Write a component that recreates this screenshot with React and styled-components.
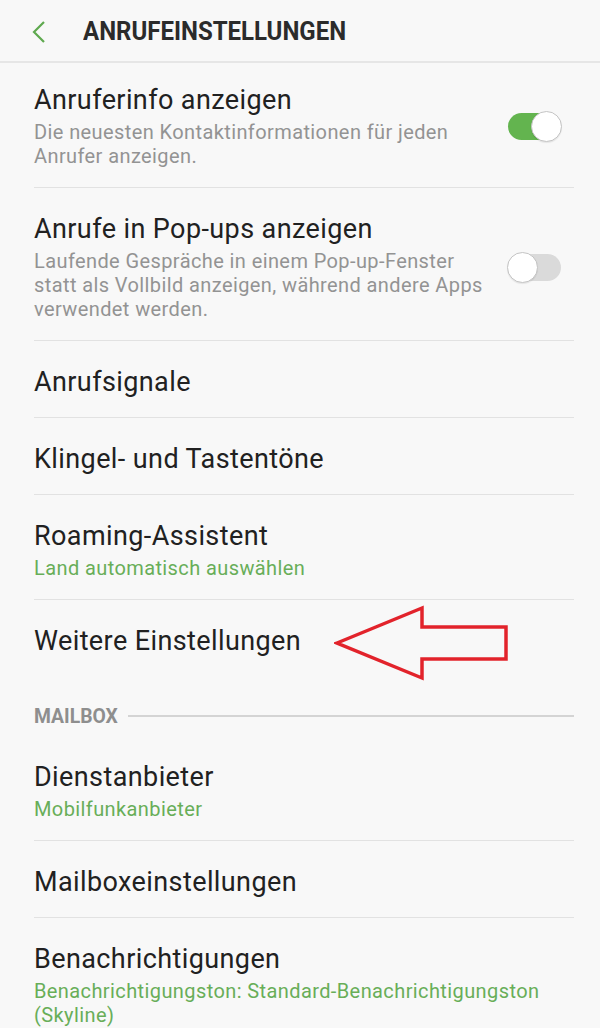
import React from 'react';
import styled, { createGlobalStyle } from 'styled-components';

const GlobalStyle = createGlobalStyle`
  html, body {
    margin: 0;
    padding: 0;
    background: #f8f8f8;
  }
  body {
    font-family: Roboto, "Noto Sans", "Liberation Sans", sans-serif;
    -webkit-font-smoothing: antialiased;
  }
`;

const Settings = () => {
  return (
    <Page>
      <GlobalStyle />
      <Header>
        <BackButton aria-label="Zurück">
          <svg width="18" height="26" viewBox="0 0 18 26">
            <polyline points="14,3 4,13 14,23" fill="none" stroke="#5fa94f" strokeWidth="2.2" />
          </svg>
        </BackButton>
        <HeaderTitle>ANRUFEINSTELLUNGEN</HeaderTitle>
      </Header>

      <List>
        <Row>
          <TextBlock>
            <Title>Anruferinfo anzeigen</Title>
            <Sub>Die neuesten Kontaktinformationen für jeden<br />Anrufer anzeigen.</Sub>
          </TextBlock>
          <Switch $on />
        </Row>
        <Row>
          <TextBlock>
            <Title>Anrufe in Pop-ups anzeigen</Title>
            <Sub>Laufende Gespräche in einem Pop-up-Fenster<br />statt als Vollbild anzeigen, während andere Apps<br />verwendet werden.</Sub>
          </TextBlock>
          <Switch />
        </Row>
        <Row>
          <TextBlock>
            <Title>Anrufsignale</Title>
          </TextBlock>
        </Row>
        <Row>
          <TextBlock>
            <Title>Klingel- und Tastentöne</Title>
          </TextBlock>
        </Row>
        <Row>
          <TextBlock>
            <Title>Roaming-Assistent</Title>
            <Sub $green>Land automatisch auswählen</Sub>
          </TextBlock>
        </Row>
        <Row>
          <TextBlock>
            <Title>Weitere Einstellungen</Title>
          </TextBlock>
          <Pointer width="176" height="78" viewBox="0 0 176 78">
            <polygon
              points="3,39 88,4 88,23 172,23 172,55 88,55 88,74"
              fill="none"
              stroke="#e2232b"
              strokeWidth="3.5"
              strokeLinejoin="miter"
            />
          </Pointer>
        </Row>

        <SectionHeader>
          <SectionLabel>MAILBOX</SectionLabel>
          <SectionRule />
        </SectionHeader>

        <Row>
          <TextBlock>
            <Title>Dienstanbieter</Title>
            <Sub $green>Mobilfunkanbieter</Sub>
          </TextBlock>
        </Row>
        <Row>
          <TextBlock>
            <Title>Mailboxeinstellungen</Title>
          </TextBlock>
        </Row>
        <Row>
          <TextBlock>
            <Title>Benachrichtigungen</Title>
            <Sub $green>Benachrichtigungston: Standard-Benachrichtigungston<br />(Skyline)</Sub>
          </TextBlock>
        </Row>
      </List>
    </Page>
  );
};

const Page = styled.div`
  width: 600px;
  height: 1028px;
  overflow: hidden;
  background: #f8f8f8;
`;

const Header = styled.header`
  height: 61px;
  display: flex;
  align-items: center;
  padding-left: 30px;
  border-bottom: 2px solid #e6e6e6;
`;

const BackButton = styled.button`
  display: flex;
  align-items: center;
  background: transparent;
  border: none;
  padding: 0;
  margin: 2px 0 0;
  cursor: pointer;
`;

const HeaderTitle = styled.h1`
  display: inline-block;
  margin: 2px 0 0 35px;
  font-size: 25px;
  font-weight: 700;
  color: #2b2b2b;
  transform: scaleX(0.96);
  transform-origin: left center;
  white-space: nowrap;
`;

const List = styled.div`
  margin: 0 26px 0 34px;
`;

const Row = styled.div`
  position: relative;
  display: flex;
  align-items: center;
  justify-content: space-between;
  padding: 25px 13px 19px 0;

  &:first-child {
    padding-top: 21px;
  }

  & + & {
    border-top: 1px solid #e2e2e2;
  }
`;

const TextBlock = styled.div`
  display: flex;
  flex-direction: column;
`;

const Title = styled.div`
  font-size: 27px;
  line-height: 32px;
  letter-spacing: 0.4px;
  color: #212121;
`;

const Sub = styled.div`
  margin-top: 4px;
  font-size: 20px;
  line-height: 24px;
  letter-spacing: 0.4px;
  color: ${(p) => (p.$green ? '#68ae58' : '#939393')};
`;

const Switch = styled.div`
  position: relative;
  flex-shrink: 0;
  width: 53px;
  height: 27px;
  border-radius: 14px;
  background: ${(p) => (p.$on ? '#63b44f' : '#dadada')};

  &::after {
    content: '';
    position: absolute;
    top: -2px;
    ${(p) => (p.$on ? 'right: -1px;' : 'left: -1px;')}
    width: 29px;
    height: 29px;
    border-radius: 50%;
    background: #ffffff;
    border: 1px solid #c4c4c4;
    box-shadow: 0 1px 1px rgba(0, 0, 0, 0.08);
  }
`;

const Pointer = styled.svg`
  position: absolute;
  left: 300px;
  top: 4px;
`;

const SectionHeader = styled.div`
  display: flex;
  align-items: center;
  gap: 10px;
  padding: 28px 0 8px;
`;

const SectionLabel = styled.span`
  display: inline-block;
  width: 84px;
  font-size: 21px;
  line-height: 24px;
  font-weight: 700;
  color: #8e8e8e;
  transform: scaleX(0.92);
  transform-origin: left center;
  white-space: nowrap;
`;

const SectionRule = styled.div`
  flex: 1;
  height: 2px;
  background: #d4d4d4;
`;

export default Settings;
